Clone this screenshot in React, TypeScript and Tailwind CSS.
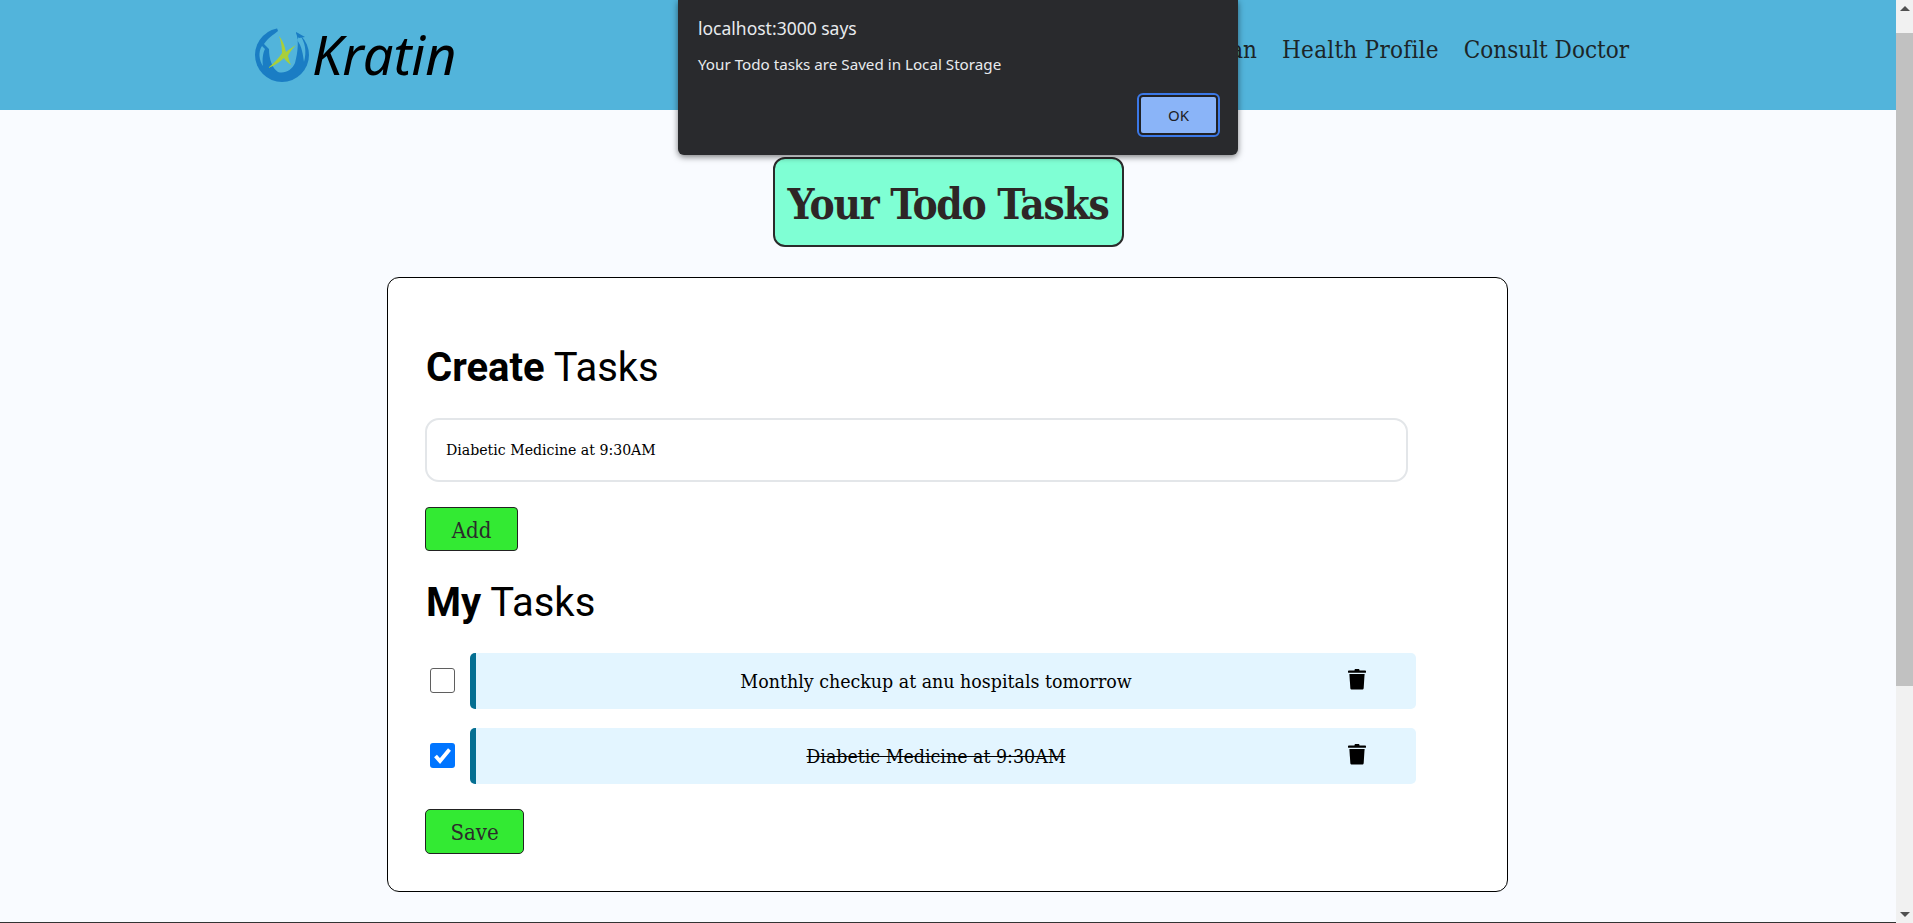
const slab = "font-['DejaVu_Serif_Condensed','DejaVu_Serif',serif]";

function Logo() {
  return (
    <div className="flex items-center">
      <svg width="54" height="54" viewBox="0 0 54 54" className="shrink-0">
        <circle cx="27" cy="27" r="27" fill="#1a7dc4" />
        <path d="M22 0 L44 0 L41 5 C44 12 43 24 40 35 C37 42 30 46 23 44 C17 40 14 31 14 21 L9 16 C13 10 18 7 23 3 Z" fill="#52b4db" />
        <path d="M45 7 C50 14 52 23 49 34 C48 27 47 18 42 12 Z" fill="#52b4db" />
        <path d="M7 18 C3 24 4 32 8 38 C7 31 8 25 10 21 Z" fill="#52b4db" />
        <path d="M41 4 L50 9 L44 10 Z" fill="#1a7dc4" />
        <path d="M24 8 C29 14 30 20 31 24 C34 21 38 19 41 17 C37 21 34 25 33 28 C34 32 35 35 36 37 C33 35 30 32 29 30 C25 34 19 38 13 40 C19 35 24 30 27 25 C27 19 26 13 24 8 Z" fill="#a9cf3a" />
      </svg>
      <span className="ml-[3px] translate-y-[-1px] font-['Noto_Sans',sans-serif] text-[54px] italic leading-none text-black">
        Kratin
      </span>
    </div>
  );
}

function Trash() {
  return (
    <svg width="18" height="21" viewBox="0 0 18 21" className="shrink-0">
      <path d="M6.5 1.2 C6.5 0.5 7 0 7.7 0 L10.3 0 C11 0 11.5 0.5 11.5 1.2 L11.5 1.5 L17.2 1.5 C17.7 1.5 18 1.8 18 2.3 L18 3.2 C18 3.6 17.7 3.8 17.2 3.8 L0.8 3.8 C0.3 3.8 0 3.6 0 3.2 L0 2.3 C0 1.8 0.3 1.5 0.8 1.5 L6.5 1.5 Z" fill="#000" />
      <path d="M1.4 5 L16.6 5 L15.7 19 C15.6 20 15 20.5 14 20.5 L4 20.5 C3 20.5 2.4 20 2.3 19 Z" fill="#000" />
    </svg>
  );
}

function Row({ text, done }: { text: string; done?: boolean }) {
  return (
    <div className="flex items-center">
      {done ? (
        <div className="-mt-[1px] flex h-[25px] w-[25px] items-center justify-center rounded-[3px] bg-[#0075ff]">
          <svg width="19" height="17" viewBox="0 0 19 17">
            <path d="M2.5 9 L7 14 L16.5 2.5" fill="none" stroke="#fff" strokeWidth="3.8" />
          </svg>
        </div>
      ) : (
        <div className="-mt-[1px] h-[25px] w-[25px] rounded-[3px] border-[1.5px] border-[#5f5f5f] bg-white" />
      )}
      <div className="ml-[15px] flex h-[56px] w-[946px] items-center rounded-[5px] border-l-[6px] border-[#056f92] bg-[#e3f5ff]">
        <div className="flex-1 pt-[2px] text-center">
          <span className={`${slab} text-[19.4px] text-black ${done ? "line-through" : ""}`}>{text}</span>
        </div>
        <div className="-ml-[48px] mr-[50px] -translate-y-[2px]">
          <Trash />
        </div>
      </div>
    </div>
  );
}

export default function App() {
  return (
    <div className="relative flex h-[923px] w-[1913px] overflow-hidden bg-[#f9fbff]">
      <div className="flex w-[1896px] flex-col border-b border-[#333]">
        <header className={`flex h-[110px] shrink-0 items-center justify-between bg-[#52b4db] pl-[255px] pr-[267px] ${slab}`}>
          <Logo />
          <nav className="flex -translate-y-[5px] gap-[25px] text-[24px] text-[#1c2527]">
            <span>Diet Plan</span>
            <span className="tracking-[0.25px]">Health Profile</span>
            <span>Consult Doctor</span>
          </nav>
        </header>

        <div className="flex flex-col items-center pt-[47px]">
          <h1 className={`flex h-[90px] w-[351px] items-center justify-center whitespace-nowrap rounded-[12px] border-2 border-[#2b2b2b] bg-[#7fffd4] pt-[4px] text-[42px] font-bold tracking-[-1.25px] text-[#2e2626] ${slab}`}>
            Your Todo Tasks
          </h1>
          <main className="ml-[387px] mt-[30px] h-[615px] w-[1121px] self-start rounded-[12px] border border-black bg-white pl-[37px] pt-[66px]">
            <h2 className="ml-[1px] font-['Roboto',sans-serif] text-[40px] leading-[48px] text-black">
              <b className="font-bold">Create</b> Tasks
            </h2>
            <div className={`mt-[26px] flex h-[64px] w-[983px] items-center rounded-[14px] border-2 border-[#e3e6e9] pl-[19px] text-[15.7px] text-black ${slab}`}>
              Diabetic Medicine at 9:30AM
            </div>
            <button className={`mt-[25px] block h-[44px] w-[93px] rounded-[4px] border border-[#222] bg-[#33ea33] pt-[2px] text-[22px] text-[#2b2b2b] ${slab}`}>
              Add
            </button>
            <h2 className="ml-[1px] mt-[28px] font-['Roboto',sans-serif] text-[40px] leading-[48px] text-black">
              <b className="font-bold">My</b> Tasks
            </h2>
            <div className="ml-[5px] mt-[26px] flex flex-col gap-[19px]">
              <Row text="Monthly checkup at anu hospitals tomorrow" />
              <Row text="Diabetic Medicine at 9:30AM" done />
            </div>
            <button className={`mt-[25px] block h-[45px] w-[99px] rounded-[5px] border border-[#222] bg-[#33ea33] pt-[2px] text-[22px] text-[#2b2b2b] ${slab}`}>
              Save
            </button>
          </main>
        </div>
      </div>

      <div className="flex h-full w-[17px] flex-col items-center bg-[#f1f1f1]">
        <div className="flex h-[17px] items-center justify-center">
          <div className="h-0 w-0 border-x-[5px] border-b-[5px] border-x-transparent border-b-[#505050]" />
        </div>
        <div className="mt-[16px] h-[653px] w-full bg-[#c1c1c1]" />
        <div className="mt-auto flex h-[17px] items-center justify-center">
          <div className="h-0 w-0 border-x-[5px] border-t-[5px] border-x-transparent border-t-[#505050]" />
        </div>
      </div>

      <div className="absolute left-[678px] top-0 flex h-[155px] w-[560px] flex-col rounded-b-[6px] bg-[#292a2d] px-[20px] font-['Noto_Sans',sans-serif] shadow-[0_2px_6px_rgba(0,0,0,0.5)]">
        <p className="mt-[16px] text-[17.5px] leading-[24px] text-[#e8eaed]">localhost:3000 says</p>
        <p className="mt-[14px] text-[15.2px] leading-[20px] text-[#e8eaed]">Your Todo tasks are Saved in Local Storage</p>
        <button className="ml-auto mt-[21px] h-[40px] w-[79px] rounded-[4px] border-2 border-[#202124] bg-[#8ab4f8] text-[15px] text-[#202124] outline-2 outline-[#3b78e7]">
          OK
        </button>
      </div>
    </div>
  );
}
